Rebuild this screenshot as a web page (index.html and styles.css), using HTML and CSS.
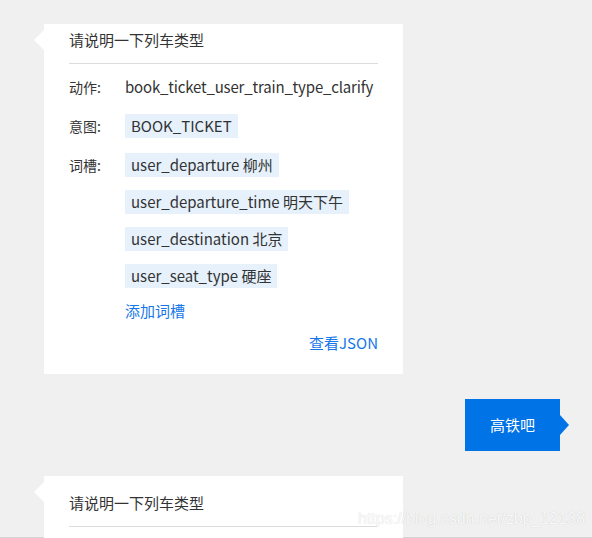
FILE: index.html
```html
<!DOCTYPE html>
<html lang="zh-CN">
<head>
  <meta charset="UTF-8" />
  <meta name="viewport" content="width=device-width, initial-scale=1.0"/>
  <title>对话</title>
  <link rel="stylesheet" href="styles.css">
</head>
<body>
  <div class="chat">
    <div class="msg bot">
      <div class="card first">
        <div class="card-title">请说明一下列车类型</div>
        <div class="row">
          <span class="label">动作:</span>
          <div class="value action">book_ticket_user_train_type_clarify</div>
        </div>
        <div class="row">
          <span class="label">意图:</span>
          <div class="value"><span class="tag">BOOK_TICKET</span></div>
        </div>
        <div class="row">
          <span class="label">词槽:</span>
          <div class="value slots">
            <span class="tag">user_departure 柳州</span>
            <span class="tag">user_departure_time 明天下午</span>
            <span class="tag">user_destination 北京</span>
            <span class="tag">user_seat_type 硬座</span>
            <a class="link add-slot">添加词槽</a>
          </div>
        </div>
        <div class="card-footer"><a class="link">查看JSON</a></div>
      </div>
    </div>

    <div class="msg user">
      <div class="bubble">高铁吧</div>
    </div>

    <div class="msg bot">
      <div class="card">
        <div class="card-title">请说明一下列车类型</div>
      </div>
    </div>
  </div>
  <div class="watermark">https://blog.csdn.net/zbp_12138</div>
</body>
</html>
```

FILE: styles.css
```css
body {
  margin: 0;
  background-color: #f0f0f0;
  font-family: "Noto Sans CJK SC", "Noto Sans", sans-serif;
  color: #333;
  height: 538px;
  overflow: hidden;
  position: relative;
  box-shadow: inset 0 -1px 0 #d4d4d4;
}
.chat {
  display: flex;
  flex-direction: column;
  gap: 25px;
  padding: 24px 32px 0 44px;
}
.msg {
  display: flex;
}
.msg.user {
  justify-content: flex-end;
}
.card {
  position: relative;
  width: 309px;
  background-color: #fff;
  padding: 14px 25px 19px;
}
.card.first {
  padding-top: 3px;
}
.card::before {
  content: "";
  position: absolute;
  left: -10px;
  top: 6px;
  border-top: 10px solid transparent;
  border-bottom: 10px solid transparent;
  border-right: 10px solid #fff;
}
.card-title {
  font-size: 15px;
  line-height: 26px;
  padding-bottom: 10px;
  border-bottom: 1px solid #dcdcdc;
  margin-bottom: 11px;
}
.row {
  display: flex;
  margin-bottom: 15px;
}
.label {
  width: 56px;
  flex-shrink: 0;
  font-size: 14px;
  line-height: 24px;
}
.value {
  font-size: 15px;
  line-height: 24px;
}
.action {
  letter-spacing: -0.17px;
}
.slots {
  display: flex;
  flex-direction: column;
  align-items: flex-start;
  gap: 13px;
}
.tag {
  display: inline-block;
  background-color: #e6f1fc;
  padding: 0 6px;
  height: 24px;
  line-height: 24px;
}
.link {
  color: #1677e8;
  font-size: 15px;
  cursor: pointer;
}
.add-slot {
  margin-top: -2px;
}
.card-footer {
  text-align: right;
  line-height: 24px;
  margin-top: -8px;
}
.bubble {
  position: relative;
  width: 95px;
  height: 52px;
  line-height: 52px;
  text-align: center;
  background-color: #0073e6;
  color: #fff;
  font-size: 15px;
}
.bubble::after {
  content: "";
  position: absolute;
  right: -9px;
  top: 16px;
  border-top: 10px solid transparent;
  border-bottom: 10px solid transparent;
  border-left: 9px solid #0073e6;
}
.watermark {
  position: absolute;
  left: 358px;
  top: 510px;
  font-family: "Liberation Sans", Arial, sans-serif;
  font-size: 16px;
  color: rgba(255, 255, 255, 0.9);
  text-shadow: 0 0 1px rgba(0, 0, 0, 0.2);
}
```
